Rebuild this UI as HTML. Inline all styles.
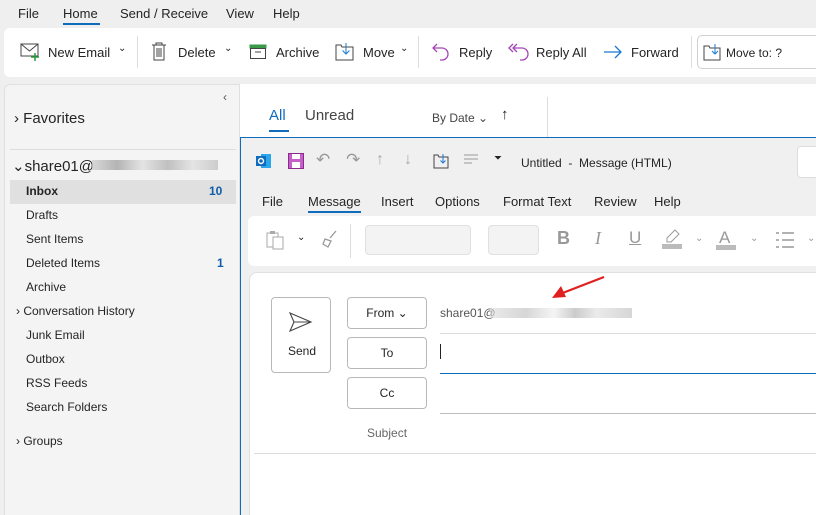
<!DOCTYPE html>
<html><head><meta charset="utf-8"><style>
*{margin:0;padding:0;box-sizing:border-box}
html{width:816px;height:515px;overflow:hidden}
body{width:816px;height:515px;overflow:hidden;background:#efefef;font-family:"Liberation Sans","DejaVu Sans",sans-serif;color:#242424;position:relative;font-size:13px}
.a{position:absolute;white-space:nowrap}
svg{position:absolute}
.t{font-size:13px}
.f{font-size:12px}
.btn{position:absolute;border:1px solid #b8b8b8;border-radius:4px;background:#fff;text-align:center;font-size:12px}
</style></head><body>
<div class="a t" style="left:18px;top:6px">File</div>
<div class="a t" style="left:63px;top:6px;font-weight:500">Home</div>
<div class="a" style="left:63px;top:23px;width:37px;height:2px;background:#0f6cbd"></div>
<div class="a t" style="left:120px;top:6px">Send / Receive</div>
<div class="a t" style="left:226px;top:6px">View</div>
<div class="a t" style="left:273px;top:6px">Help</div>
<div class="a" style="left:4px;top:28px;width:830px;height:49px;background:#fff;border-radius:6px"></div>
<svg style="left:20px;top:43px" width="22" height="20"><rect x="1" y="1" width="17" height="12" fill="none" stroke="#444"/><path d="M1 1l8.5 7 8.5-7" fill="none" stroke="#444"/><path d="M15 10v8M11 14h8" stroke="#2a9a3a" stroke-width="1.5"/></svg>
<div class="a t" style="left:48px;top:45px">New Email</div>
<div class="a" style="left:118px;top:43px;font-size:10px">⌄</div>
<div class="a" style="left:137px;top:36px;width:1px;height:32px;background:#ddd"></div>
<svg style="left:151px;top:42px" width="16" height="20"><path d="M1 3h14M5 3V1h6v2M3 3v15h10V3M6 6v9M8 6v9M10 6v9" fill="none" stroke="#444"/></svg>
<div class="a t" style="left:178px;top:45px">Delete</div>
<div class="a" style="left:224px;top:43px;font-size:10px">⌄</div>
<svg style="left:249px;top:44px" width="18" height="16"><rect x="0.5" y="0.5" width="17" height="4" fill="#3a9a4a"/><rect x="1.5" y="4.5" width="15" height="10" fill="none" stroke="#444"/><path d="M6 8h6" stroke="#444"/></svg>
<div class="a t" style="left:276px;top:45px">Archive</div>
<svg style="left:335px;top:42px" width="20" height="20"><path d="M1 3h5l1 2h11v13H1z" fill="none" stroke="#444"/><path d="M11 1v11M7.5 8.5l3.5 3.5 3.5-3.5" fill="none" stroke="#1a7ad0"/></svg>
<div class="a t" style="left:363px;top:45px">Move</div>
<div class="a" style="left:400px;top:43px;font-size:10px">⌄</div>
<div class="a" style="left:418px;top:36px;width:1px;height:32px;background:#ddd"></div>
<svg style="left:432px;top:43px" width="18" height="18"><path d="M5 1L1 5l4 4M1 5h9a6 6 0 0 1 0 12H8" fill="none" stroke="#a646b8" stroke-width="1.3"/></svg>
<div class="a t" style="left:459px;top:45px">Reply</div>
<svg style="left:508px;top:43px" width="22" height="18"><path d="M5 1L1 5l4 4M9 1L5 5l4 4M5 5h9a6 6 0 0 1 0 12h-2" fill="none" stroke="#a646b8" stroke-width="1.3"/></svg>
<div class="a t" style="left:536px;top:45px">Reply All</div>
<svg style="left:603px;top:45px" width="20" height="14"><path d="M1 7h17M12 1l6 6-6 6" fill="none" stroke="#1a7ad0" stroke-width="1.3"/></svg>
<div class="a t" style="left:631px;top:45px">Forward</div>
<div class="a" style="left:691px;top:36px;width:1px;height:32px;background:#ddd"></div>
<div class="a" style="left:697px;top:35px;width:130px;height:34px;border:1px solid #d0d0d0;border-radius:5px"></div>
<svg style="left:703px;top:43px" width="18" height="18"><path d="M1 3h5l1 2h10v12H1z" fill="none" stroke="#444"/><path d="M12 1v10M9 8l3 3 3-3" fill="none" stroke="#1a7ad0"/></svg>
<div class="a f" style="left:726px;top:46px">Move to: ?</div>
<div class="a" style="left:4px;top:84px;width:236px;height:440px;background:#f4f4f4;border-radius:6px 0 0 0;border:1px solid #e0e0e0"></div>
<div class="a" style="left:223px;top:90px;font-size:12px;color:#555">‹</div>
<div class="a" style="left:14px;top:110px;font-size:15px">›&nbsp;Favorites</div>
<div class="a" style="left:10px;top:149px;width:226px;height:1px;background:#ddd"></div>
<div class="a" style="left:12px;top:157px;font-size:15px">⌄share01@</div>
<div class="a" style="left:92px;top:160px;width:126px;height:10px;background:linear-gradient(90deg,#ccc,#999 20%,#ddd 40%,#aaa 60%,#ddd 80%,#bbb);opacity:.7"></div>
<div class="a" style="left:10px;top:180px;width:226px;height:24px;background:#e0e0e0"></div>
<div class="a f" style="left:26px;top:184px;font-weight:bold">Inbox</div>
<div class="a f" style="left:209px;top:184px;font-weight:bold;color:#0f5ca8">10</div>
<div class="a f" style="left:26px;top:208px">Drafts</div>
<div class="a f" style="left:26px;top:232px">Sent Items</div>
<div class="a f" style="left:26px;top:256px">Deleted Items</div>
<div class="a f" style="left:217px;top:256px;font-weight:bold;color:#0f5ca8">1</div>
<div class="a f" style="left:26px;top:280px">Archive</div>
<div class="a f" style="left:16px;top:304px">›&nbsp;Conversation History</div>
<div class="a f" style="left:26px;top:328px">Junk Email</div>
<div class="a f" style="left:26px;top:352px">Outbox</div>
<div class="a f" style="left:26px;top:376px">RSS Feeds</div>
<div class="a f" style="left:26px;top:400px">Search Folders</div>
<div class="a f" style="left:16px;top:434px">›&nbsp;Groups</div>
<div class="a" style="left:240px;top:84px;width:600px;height:60px;background:#fff"></div>
<div class="a" style="left:269px;top:107px;font-size:15px;color:#0f6cbd">All</div>
<div class="a" style="left:269px;top:130px;width:20px;height:2px;background:#0f6cbd"></div>
<div class="a" style="left:305px;top:107px;font-size:15px;color:#444">Unread</div>
<div class="a f" style="left:432px;top:111px;color:#444">By Date ⌄</div>
<div class="a" style="left:501px;top:106px;font-size:15px">↑</div>
<div class="a" style="left:547px;top:97px;width:1px;height:40px;background:#ddd"></div>
<div class="a" style="left:240px;top:137px;width:600px;height:400px;background:#f0f0f0;border:1px solid #0f6cbd;border-right:none;border-bottom:none"></div>
<svg style="left:256px;top:153px" width="16" height="16"><rect x="5" y="1" width="10" height="14" fill="#28a8ea"/><rect x="0" y="3" width="10" height="10" fill="#0f6cbd"/><circle cx="5" cy="8" r="2.5" fill="none" stroke="#fff" stroke-width="1.4"/></svg>
<svg style="left:288px;top:153px" width="16" height="16"><rect x="0.5" y="0.5" width="15" height="15" fill="#c75fc8" stroke="#8a2a8a"/><rect x="4" y="1" width="8" height="5" fill="#fff"/><rect x="4" y="9" width="8" height="6" fill="#fff"/></svg>
<div class="a" style="left:316px;top:150px;font-size:17px;color:#999">↶</div>
<div class="a" style="left:346px;top:150px;font-size:17px;color:#999">↷</div>
<div class="a" style="left:376px;top:151px;font-size:16px;color:#aaa">↑</div>
<div class="a" style="left:404px;top:151px;font-size:16px;color:#aaa">↓</div>
<svg style="left:433px;top:153px" width="16" height="16"><path d="M1 2h4l1 2h9v11H1z" fill="none" stroke="#444"/><path d="M10 1v9M7.5 7.5l2.5 2.5 2.5-2.5" fill="none" stroke="#1a7ad0"/></svg>
<svg style="left:463px;top:154px" width="16" height="14"><path d="M1 1h14M1 5h14M1 9h8" stroke="#999"/></svg>
<div class="a" style="left:494px;top:153px;font-size:10px">⏷</div>
<div class="a f" style="left:521px;top:156px">Untitled&nbsp; - &nbsp;Message (HTML)</div>
<div class="a" style="left:797px;top:146px;width:40px;height:32px;background:#fff;border:1px solid #ddd;border-radius:4px"></div>
<div class="a t" style="left:262px;top:194px">File</div>
<div class="a t" style="left:308px;top:194px">Message</div>
<div class="a" style="left:308px;top:211px;width:53px;height:2px;background:#0f6cbd"></div>
<div class="a t" style="left:381px;top:194px">Insert</div>
<div class="a t" style="left:435px;top:194px">Options</div>
<div class="a t" style="left:503px;top:194px">Format Text</div>
<div class="a t" style="left:594px;top:194px">Review</div>
<div class="a t" style="left:654px;top:194px">Help</div>
<div class="a" style="left:248px;top:216px;width:600px;height:50px;background:#fff;border-radius:6px"></div>
<svg style="left:266px;top:230px" width="20" height="20"><rect x="1" y="3" width="11" height="14" fill="none" stroke="#aaa"/><rect x="7" y="7" width="10" height="12" fill="#fff" stroke="#aaa"/><rect x="4" y="1" width="5" height="3" fill="#aaa"/></svg>
<div class="a" style="left:297px;top:232px;font-size:10px">⌄</div>
<svg style="left:322px;top:230px" width="18" height="18"><path d="M14 1l-6 7M3 9l6 2-3 6-5-3z" fill="none" stroke="#999" stroke-width="1.3"/></svg>
<div class="a" style="left:350px;top:224px;width:1px;height:34px;background:#ddd"></div>
<div class="a" style="left:365px;top:225px;width:106px;height:30px;background:#f3f3f3;border:1px solid #e0e0e0;border-radius:4px"></div>
<div class="a" style="left:488px;top:225px;width:51px;height:30px;background:#f3f3f3;border:1px solid #e0e0e0;border-radius:4px"></div>
<div class="a" style="left:557px;top:228px;font-size:18px;font-weight:bold;color:#999">B</div>
<div class="a" style="left:595px;top:228px;font-size:18px;font-style:italic;color:#999;font-family:'Liberation Serif',serif">I</div>
<div class="a" style="left:629px;top:228px;font-size:17px;text-decoration:underline;color:#999">U</div>
<svg style="left:662px;top:228px" width="20" height="22"><path d="M13 2l4 4-8 8H5v-4z" fill="none" stroke="#999"/><rect x="0" y="16" width="20" height="5" fill="#bbb"/></svg>
<div class="a" style="left:695px;top:233px;font-size:10px;color:#999">⌄</div>
<div class="a" style="left:719px;top:228px;font-size:17px;color:#999">A</div>
<div class="a" style="left:716px;top:245px;width:20px;height:5px;background:#bbb"></div>
<div class="a" style="left:750px;top:233px;font-size:10px;color:#999">⌄</div>
<svg style="left:776px;top:231px" width="20" height="18"><path d="M0 2h3M6 2h12M0 9h3M6 9h12M0 16h3M6 16h12" stroke="#999" stroke-width="1.5"/></svg>
<div class="a" style="left:807px;top:233px;font-size:10px;color:#999">⌄</div>
<div class="a" style="left:249px;top:272px;width:600px;height:260px;background:#fff;border-radius:8px 0 0 0;border:1px solid #e0e0e0"></div>
<div class="btn" style="left:271px;top:297px;width:60px;height:76px"></div>
<svg style="left:289px;top:312px" width="24" height="20"><path d="M1 1l21 9L1 19l4-9z M5 10h17" fill="none" stroke="#444" stroke-width="1.1"/></svg>
<div class="a f" style="left:288px;top:344px">Send</div>
<div class="btn" style="left:347px;top:297px;width:80px;height:32px;line-height:30px">From ⌄</div>
<div class="btn" style="left:347px;top:337px;width:80px;height:32px;line-height:30px">To</div>
<div class="btn" style="left:347px;top:377px;width:80px;height:32px;line-height:30px">Cc</div>
<div class="a f" style="left:367px;top:426px;color:#666">Subject</div>
<div class="a f" style="left:440px;top:306px;color:#555">share01@</div>
<div class="a" style="left:490px;top:308px;width:142px;height:10px;background:linear-gradient(90deg,#ddd,#bbb 25%,#eee 45%,#aaa 60%,#ddd 75%,#bbb);opacity:.6"></div>
<svg style="left:550px;top:274px" width="58" height="28"><path d="M54 3L10 20" stroke="#e02020" stroke-width="2.2"/><path d="M2 24l14-1-5-11z" fill="#e02020"/></svg>
<div class="a" style="left:440px;top:333px;width:380px;height:1px;background:#ddd"></div>
<div class="a" style="left:440px;top:344px;width:1px;height:15px;background:#222"></div>
<div class="a" style="left:440px;top:373px;width:380px;height:1px;background:#0f6cbd"></div>
<div class="a" style="left:440px;top:413px;width:380px;height:1px;background:#bbb"></div>
<div class="a" style="left:254px;top:453px;width:570px;height:1px;background:#ddd"></div>
</body></html>
